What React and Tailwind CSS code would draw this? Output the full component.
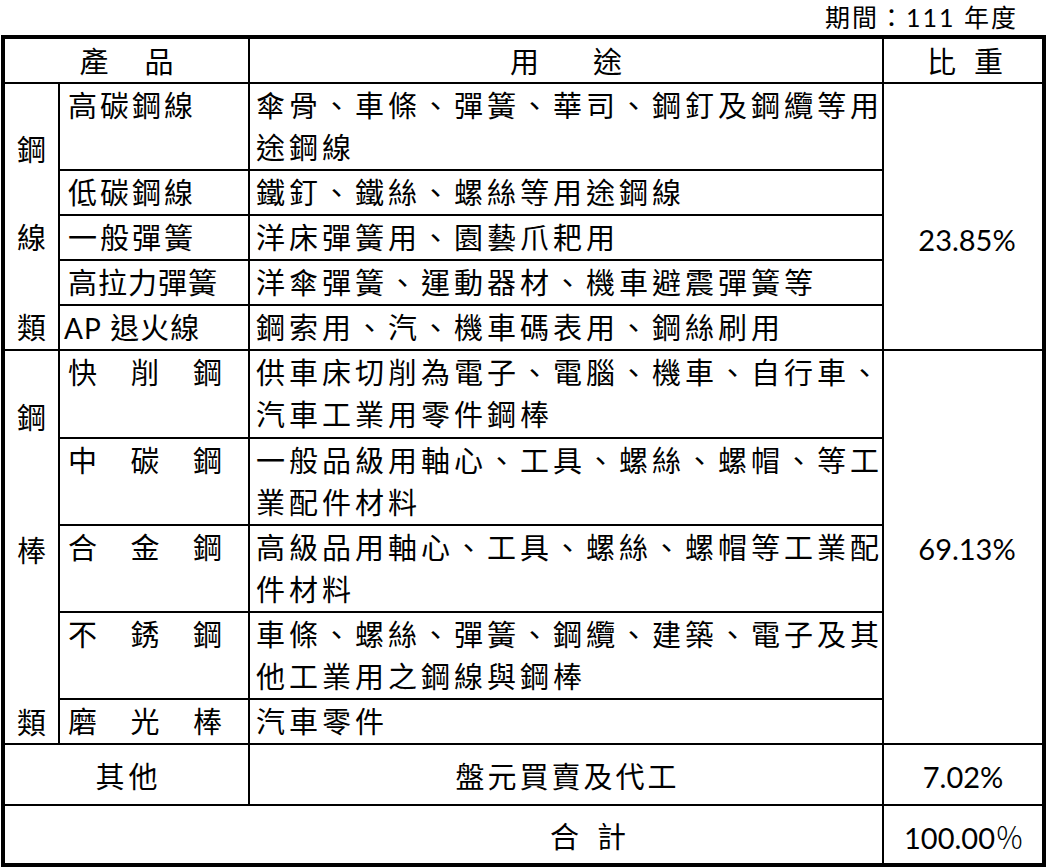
import React from "react";

const wireRows = [
  { name: "低碳鋼線", use: "鐵釘、鐵絲、螺絲等用途鋼線" },
  { name: "一般彈簧", use: "洋床彈簧用、園藝爪耙用" },
  { name: "高拉力彈簧", use: "洋傘彈簧、運動器材、機車避震彈簧等", tight: true },
];

const rodRows = [
  { name: ["中", "碳", "鋼"], lines: ["一般品級用軸心、工具、螺絲、螺帽、等工", "業配件材料"], h: "h-[87px]" },
  { name: ["合", "金", "鋼"], lines: ["高級品用軸心、工具、螺絲、螺帽等工業配", "件材料"], h: "h-[86px]" },
  { name: ["不", "銹", "鋼"], lines: ["車條、螺絲、彈簧、鋼纜、建築、電子及其", "他工業用之鋼線與鋼棒"], h: "h-[86px]" },
];

const cell = "border-2 border-black p-0";

function Spread({ chars }) {
  return (
    <div className="flex justify-between pl-[8px] pr-[26px]">
      {chars.map((c) => (
        <span key={c}>{c}</span>
      ))}
    </div>
  );
}

function Lines({ lines }) {
  return (
    <div className="pl-[6px] pt-[1px] tracking-[4px] whitespace-nowrap">
      {lines.map((l) => (
        <div key={l}>{l}</div>
      ))}
    </div>
  );
}

export default function App() {
  return (
    <div className="w-[1047px] h-[868px] bg-white text-black font-['Lato','Noto_Sans_CJK_TC',sans-serif] overflow-hidden">
      <div className="h-[35px] flex items-center justify-end pr-[29px] text-[25px] tracking-[2px] leading-none">
        期間：111 年度
      </div>
      <div className="pl-[1px]">
        <table className="table-fixed w-[1043px] border-collapse border-[4px] border-black text-[29px] leading-[42px]">
          <colgroup>
            <col className="w-[56px]" />
            <col className="w-[190px]" />
            <col className="w-[634px]" />
            <col className="w-[161px]" />
          </colgroup>
          <tbody>
            <tr className="h-[45px]">
              <td colSpan={2} className={`${cell} align-middle leading-[40px]`}>
                <div className="flex justify-center gap-[36px] pt-[3px]">
                  <span>產</span>
                  <span>品</span>
                </div>
              </td>
              <td className={`${cell} align-middle leading-[40px]`}>
                <div className="flex justify-center gap-[54px] pt-[3px]">
                  <span>用</span>
                  <span>途</span>
                </div>
              </td>
              <td className={`${cell} align-middle leading-[40px]`}>
                <div className="flex justify-center gap-[18px] pt-[3px] pl-[4px]">
                  <span>比</span>
                  <span>重</span>
                </div>
              </td>
            </tr>

            <tr className="h-[87px]">
              <td rowSpan={5} className={`${cell} align-top text-center`}>
                <div className="flex flex-col leading-[30px]">
                  <span className="mt-[51px]">鋼</span>
                  <span className="mt-[58px]">線</span>
                  <span className="mt-[60px]">類</span>
                </div>
              </td>
              <td className={`${cell} align-top`}>
                <div className="pl-[8px] pt-[1px] tracking-[3px]">高碳鋼線</div>
              </td>
              <td className={`${cell} align-top`}>
                <Lines lines={["傘骨、車條、彈簧、華司、鋼釘及鋼纜等用", "途鋼線"]} />
              </td>
              <td rowSpan={5} className={`${cell} align-top text-center`}>
                <div className="pt-[135px] pl-[8px]">23.85%</div>
              </td>
            </tr>

            {wireRows.map((r) => (
              <tr key={r.name} className="h-[45px]">
                <td className={`${cell} align-middle`}>
                  <div className={`pl-[8px] pt-[1px] ${r.tight ? "tracking-[1px]" : "tracking-[3px]"}`}>{r.name}</div>
                </td>
                <td className={`${cell} align-middle`}>
                  <div className="pl-[6px] pt-[1px] tracking-[4px] whitespace-nowrap">{r.use}</div>
                </td>
              </tr>
            ))}

            <tr className="h-[45px]">
              <td className={`${cell} align-middle`}>
                <div className="pl-[4px] pt-[1px] tracking-[1px]">
                  <span className="text-[28px]">AP</span> 退火線
                </div>
              </td>
              <td className={`${cell} align-middle`}>
                <div className="pl-[6px] pt-[1px] tracking-[4px] whitespace-nowrap">鋼索用、汽、機車碼表用、鋼絲刷用</div>
              </td>
            </tr>

            <tr className="h-[88px]">
              <td rowSpan={5} className={`${cell} align-top text-center`}>
                <div className="flex flex-col leading-[30px]">
                  <span className="mt-[52px]">鋼</span>
                  <span className="mt-[103px]">棒</span>
                  <span className="mt-[142px]">類</span>
                </div>
              </td>
              <td className={`${cell} align-top`}>
                <div className="pt-[1px]">
                  <Spread chars={["快", "削", "鋼"]} />
                </div>
              </td>
              <td className={`${cell} align-top`}>
                <Lines lines={["供車床切削為電子、電腦、機車、自行車、", "汽車工業用零件鋼棒"]} />
              </td>
              <td rowSpan={5} className={`${cell} align-middle text-center`}>
                <div className="pl-[8px] pt-[4px]">69.13%</div>
              </td>
            </tr>

            {rodRows.map((r) => (
              <tr key={r.lines[0]} className={r.h}>
                <td className={`${cell} align-top`}>
                  <div className="pt-[1px]">
                    <Spread chars={r.name} />
                  </div>
                </td>
                <td className={`${cell} align-top`}>
                  <Lines lines={r.lines} />
                </td>
              </tr>
            ))}

            <tr className="h-[45px]">
              <td className={`${cell} align-middle`}>
                <div className="pt-[1px]">
                  <Spread chars={["磨", "光", "棒"]} />
                </div>
              </td>
              <td className={`${cell} align-middle`}>
                <div className="pl-[6px] pt-[1px] tracking-[4px]">汽車零件</div>
              </td>
            </tr>

            <tr className="h-[61px]">
              <td colSpan={2} className={`${cell} align-middle text-center`}>
                <div className="pt-[5px] tracking-[4px] pl-[4px]">其他</div>
              </td>
              <td className={`${cell} align-middle text-center`}>
                <div className="pt-[5px] tracking-[3px] pl-[3px]">盤元買賣及代工</div>
              </td>
              <td className={`${cell} align-middle text-center`}>
                <div className="pt-[5px]">7.02%</div>
              </td>
            </tr>

            <tr className="h-[60px]">
              <td colSpan={3} className={`${cell} align-middle`}>
                <div className="pt-[5px] pl-[545px] flex gap-[18px]">
                  <span>合</span>
                  <span>計</span>
                </div>
              </td>
              <td className={`${cell} align-middle text-center`}>
                <div className="pt-[5px] pl-[2px]">
                  100.00<span className="font-['Noto_Sans_CJK_TC',sans-serif] font-light">％</span>
                </div>
              </td>
            </tr>
          </tbody>
        </table>
      </div>
    </div>
  );
}
